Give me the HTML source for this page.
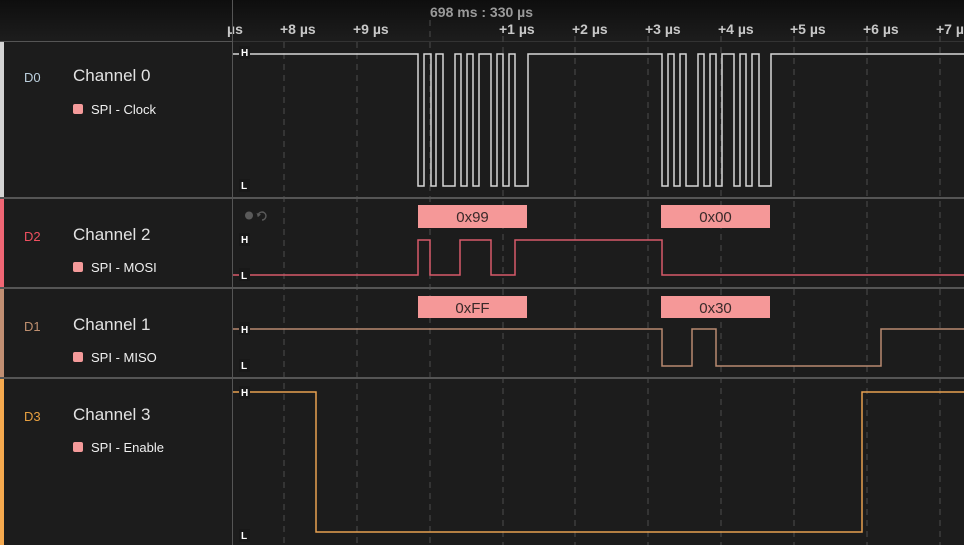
<!DOCTYPE html>
<html><head><meta charset="utf-8"><style>
html,body{margin:0;padding:0;background:#1c1c1c;width:964px;height:545px;overflow:hidden}
svg{display:block}
text{font-family:"Liberation Sans",sans-serif}
</style></head><body>
<svg width="964" height="545" viewBox="0 0 964 545" xmlns="http://www.w3.org/2000/svg">
<defs>
<linearGradient id="hg" x1="0" y1="0" x2="0" y2="1"><stop offset="0" stop-color="#0e0e0e"/><stop offset="1" stop-color="#1d1d1d"/></linearGradient>
</defs>
<rect x="0" y="0" width="964" height="545" fill="#1c1c1c"/>
<rect x="0" y="0" width="964" height="41" fill="url(#hg)"/>
<line x1="0" y1="41.5" x2="964" y2="41.5" stroke="#333" stroke-width="1"/>
<line x1="0" y1="41.5" x2="232" y2="41.5" stroke="#555" stroke-width="1"/>
<g stroke="#444" stroke-width="1.2" stroke-dasharray="6,5">
<line x1="284" y1="42" x2="284" y2="545"/>
<line x1="357" y1="42" x2="357" y2="545"/>
<line x1="430" y1="20" x2="430" y2="545"/>
<line x1="503" y1="36" x2="503" y2="545"/>
<line x1="575" y1="36" x2="575" y2="545"/>
<line x1="648" y1="36" x2="648" y2="545"/>
<line x1="721" y1="36" x2="721" y2="545"/>
<line x1="794" y1="36" x2="794" y2="545"/>
<line x1="867" y1="36" x2="867" y2="545"/>
<line x1="940" y1="36" x2="940" y2="545"/>
</g>
<g fill="#c8c8c8" font-size="14" font-weight="bold">
<text x="227" y="34">µs</text>
<text x="280" y="34">+8 µs</text>
<text x="353" y="34">+9 µs</text>
<text x="499" y="34">+1 µs</text>
<text x="572" y="34">+2 µs</text>
<text x="645" y="34">+3 µs</text>
<text x="718" y="34">+4 µs</text>
<text x="790" y="34">+5 µs</text>
<text x="863" y="34">+6 µs</text>
<text x="936" y="34">+7 µs</text>
<text x="430" y="17" fill="#9a9a9a">698 ms : 330 µs</text>
</g>
<g fill="#555">
<rect x="0" y="197" width="964" height="2"/>
<rect x="0" y="287" width="964" height="2"/>
<rect x="0" y="377" width="964" height="2"/>
</g>
<rect x="232" y="0" width="1" height="545" fill="#555"/>
<rect x="0" y="42" width="4" height="155" fill="#d4d4d4"/>
<rect x="0" y="199" width="4" height="88" fill="#f06674"/>
<rect x="0" y="289" width="4" height="88" fill="#c08e72"/>
<rect x="0" y="379" width="4" height="166" fill="#f5a94e"/>
<g font-size="13">
<text x="24" y="82" fill="#bcd0de">D0</text>
<text x="24" y="241" fill="#f05060">D2</text>
<text x="24" y="331" fill="#c09070">D1</text>
<text x="24" y="421" fill="#e8a040">D3</text>
</g>
<g font-size="17" fill="#e2e2e2">
<text x="73" y="81">Channel 0</text>
<text x="73" y="240">Channel 2</text>
<text x="73" y="330">Channel 1</text>
<text x="73" y="420">Channel 3</text>
</g>
<g fill="#f49a9a">
<rect x="73" y="104" width="10" height="10" rx="2"/>
<rect x="73" y="262" width="10" height="10" rx="2"/>
<rect x="73" y="352" width="10" height="10" rx="2"/>
<rect x="73" y="442" width="10" height="10" rx="2"/>
</g>
<g font-size="13" fill="#f0f0f0">
<text x="91" y="114">SPI - Clock</text>
<text x="91" y="272">SPI - MOSI</text>
<text x="91" y="362">SPI - MISO</text>
<text x="91" y="452">SPI - Enable</text>
</g>
<g fill="none" stroke-width="1.5">
<path stroke="#d6d6d6" d="M233 54H418V186H424V54H431V186H436V54H443V186H455V54H461V186H467V54H473V186H479V54H491V186H497V54H503V186H509V54H515V186H528V54H662V186H668V54H674V186H680V54H686V186H698V54H704V186H710V54H716V186H722V54H734V186H740V54H746V186H752V54H759V186H771V54H964"/>
<path stroke="#d65a6a" d="M233 275H418V240H430V275H460V240H491V275H515V240H662V275H964"/>
<path stroke="#b88a70" d="M233 329H662V366H692V329H716V366H881V329H964"/>
<path stroke="#e6a050" d="M233 392H316V532H862V392H964"/>
</g>
<g font-size="10" font-weight="bold" fill="#fff">
<rect x="239" y="46" width="11" height="13" fill="#181818"/><text x="241" y="56">H</text>
<rect x="239" y="179" width="11" height="13" fill="#181818"/><text x="241" y="189">L</text>
<rect x="239" y="233" width="11" height="13" fill="#181818"/><text x="241" y="243">H</text>
<rect x="239" y="268" width="11" height="13" fill="#181818"/><text x="241" y="279">L</text>
<rect x="239" y="322" width="11" height="13" fill="#181818"/><text x="241" y="333">H</text>
<rect x="239" y="359" width="11" height="13" fill="#181818"/><text x="241" y="369">L</text>
<rect x="239" y="386" width="11" height="13" fill="#181818"/><text x="241" y="396">H</text>
<rect x="239" y="529" width="11" height="13" fill="#181818"/><text x="241" y="539">L</text>
</g>
<circle cx="249" cy="215.5" r="4" fill="#5a5a5a"/>
<path d="M258 216.5a4 4 0 1 1 4 3.5" stroke="#5a5a5a" stroke-width="1.4" fill="none"/>
<path d="M256.5 213l1.5 4 3-2.5z" fill="#5a5a5a"/>
<g fill="#f59898">
<rect x="418" y="205" width="109" height="23"/>
<rect x="661" y="205" width="109" height="23"/>
<rect x="418" y="296" width="109" height="22"/>
<rect x="661" y="296" width="109" height="22"/>
</g>
<g font-size="15" fill="#3a2a2a" text-anchor="middle">
<text x="472.5" y="222">0x99</text>
<text x="715.5" y="222">0x00</text>
<text x="472.5" y="313">0xFF</text>
<text x="715.5" y="313">0x30</text>
</g>
</svg>
</body></html>
